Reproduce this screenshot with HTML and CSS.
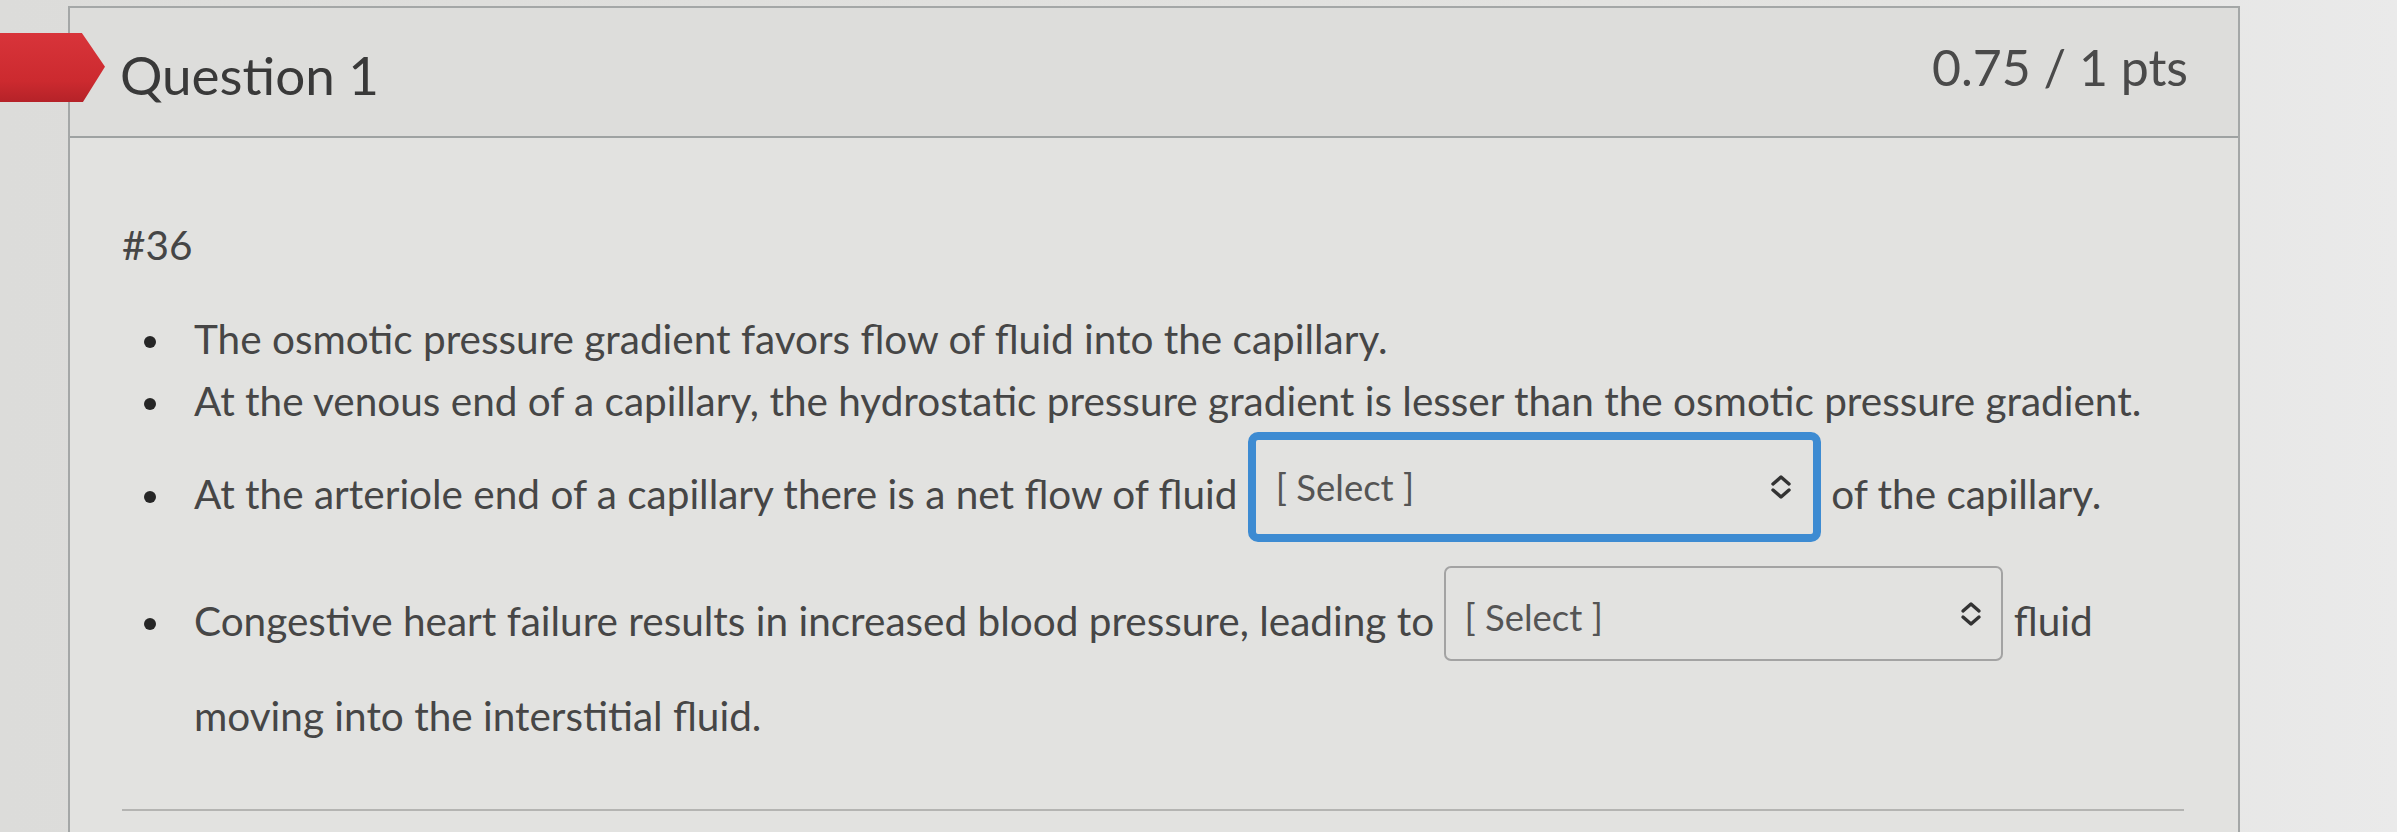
FILE: index.html
```html
<!DOCTYPE html>
<html lang="en">
<head>
<meta charset="utf-8">
<title>Question 1</title>
<link rel="stylesheet" href="styles.css">
</head>
<body>
<div class="page">
  <div class="flag" aria-hidden="true"></div>
  <section class="question">
    <header class="question-header">
      <h2 class="question-title">Question 1</h2>
      <div class="question-points">0.75 / 1 pts</div>
    </header>
    <div class="question-body">
      <p class="question-number">#36</p>
      <ul class="statements">
        <li>The osmotic pressure gradient favors flow of fluid into the capillary.</li>
        <li>At the venous end of a capillary, the hydrostatic pressure gradient is lesser than the osmotic pressure gradient.</li>
        <li>At the arteriole end of a capillary there is a net flow of fluid <span class="select select--focused"><span class="select-text">[ Select ]</span><svg class="chevron" width="24" height="28" viewBox="0 0 24 28" aria-hidden="true"><path d="M4 11 L12 4 L20 11 M4 17 L12 24 L20 17" fill="none" stroke="#333" stroke-width="3.4" stroke-linecap="round" stroke-linejoin="round"/></svg></span> of the capillary.</li>
        <li>Congestive heart failure results in increased blood pressure, leading to <span class="select select--plain"><span class="select-text">[ Select ]</span><svg class="chevron" width="24" height="28" viewBox="0 0 24 28" aria-hidden="true"><path d="M4 11 L12 4 L20 11 M4 17 L12 24 L20 17" fill="none" stroke="#333" stroke-width="3.4" stroke-linecap="round" stroke-linejoin="round"/></svg></span> fluid moving into the interstitial fluid.</li>
      </ul>
      <div class="divider"></div>
    </div>
  </section>
</div>
</body>
</html>
```
FILE: styles.css
```css
html, body {
  margin: 0;
  padding: 0;
}

body {
  width: 2397px;
  height: 832px;
  overflow: hidden;
  background: linear-gradient(90deg, #dcdcda 0%, #e0e0de 40%, #e3e3e1 80%, #eaeaea 100%);
  font-family: Lato, "Open Sans", "Liberation Sans", sans-serif;
  color: #464646;
}

.page {
  position: relative;
  padding-top: 6px;
}

.flag {
  position: absolute;
  left: 0;
  top: 33px;
  width: 105px;
  height: 69px;
  background: linear-gradient(180deg, #d8343a 0%, #cc2a2f 70%, #b52228 100%);
  clip-path: polygon(0 0, 78% 0, 100% 49%, 79% 100%, 0 100%);
  z-index: 2;
}

.question {
  margin-left: 68px;
  width: 2172px;
  height: 840px;
  box-sizing: border-box;
  border: 2px solid #a4a7a7;
  border-bottom: none;
  background: #e2e2e0;
}

.question-header {
  display: flex;
  justify-content: space-between;
  align-items: flex-start;
  height: 128px;
  padding: 0 50px 0 50px;
  background: #dddddb;
  border-bottom: 2px solid #9ea2a2;
}

.question-title {
  margin: 37px 0 0;
  font-size: 53px;
  line-height: 60px;
  font-weight: 400;
  color: #393939;
}

.question-points {
  margin-top: 29px;
  font-size: 50px;
  line-height: 60px;
  color: #4a4a4a;
}

.question-body {
  padding: 76px 54px 0 52px;
  font-size: 40.5px;
  line-height: 62px;
}

.question-number {
  margin: 0;
}

.statements {
  margin: 32px 0 0;
  padding-left: 72px;
  list-style: none;
}

.statements li::before {
  content: "";
  display: inline-block;
  width: 12px;
  height: 12px;
  border-radius: 50%;
  background: #262626;
  margin-left: -50px;
  margin-right: 38px;
  vertical-align: 6px;
}

.select {
  display: inline-flex;
  align-items: center;
  justify-content: space-between;
  box-sizing: border-box;
  margin-bottom: 24px;
  font-size: 36.5px;
  line-height: 1;
  color: #555;
}

.select--focused {
  width: 573px;
  height: 110px;
  border: 8px solid #3d8bd2;
  border-radius: 10px;
  padding: 0 20px 0 20px;
  vertical-align: 8px;
}

.select--plain {
  width: 559px;
  height: 95px;
  border: 2px solid #a3a3a3;
  border-radius: 7px;
  padding: 0 18px 0 18px;
  vertical-align: 5px;
}

.select--plain .select-text {
  margin-top: 8px;
}

.chevron {
  display: block;
  flex: none;
}

.divider {
  margin-top: 62px;
  height: 2px;
  background: #b4b4b2;
}
```
